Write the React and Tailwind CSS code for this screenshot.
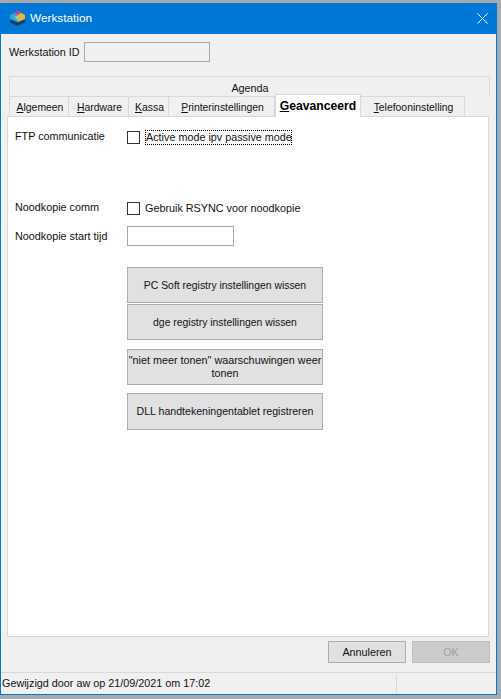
const Tab = ({ first, rest, className = "" }) => (
    <div className={`h-5 border-t border-r border-[#d9d9d9] flex justify-center items-center pt-[3px] pl-[2px] text-[10.4px] ${className}`}>
        <span><u>{first}</u>{rest}</span>
    </div>
);

const Check = () => <div className="w-[13px] h-[13px] border border-[#333333] bg-white shrink-0"></div>;

const GrayButton = ({ className = "", children }) => (
    <button className={`w-[196px] border border-[#adadad] bg-[#e1e1e1] flex items-center justify-center text-center leading-[13px] ${className}`}>
        {children}
    </button>
);

export default function App() {
    return (
        <div className="w-[501px] h-[699px] bg-[#a9a9a9] pt-[3px] pr-1 pb-1 font-['Liberation_Sans',sans-serif] text-[10.8px] text-[#111111] overflow-hidden">
            <div className="h-[692px] w-[497px] bg-[#f0f0f0] border-x border-b border-[#0078d7] flex flex-col">
                {/* title bar */}
                <div className="h-[31px] bg-[#0078d7] flex items-center pl-2 pr-2 shrink-0">
                    <svg width="17" height="17" viewBox="0 0 17 17" className="shrink-0">
                        <path d="M1 9 L8.500 12.500 L16 9 L16 12.500 L8.500 16 L1 12.500 Z" fill="#1c3f6e" />
                        <path d="M1 5 L8.500 1 L8.500 12 L1 9 Z" fill="#27a9d8" />
                        <path d="M8.500 1 L16 5 L16 9 L8.500 12 Z" fill="#f4b42a" />
                        <path d="M5 3 L8.500 1 L12 3 L8.500 5 Z" fill="#d6358f" />
                        <path d="M5 7 L8.500 5.500 L12 7 L8.500 10 Z" fill="#8ed1a0" />
                    </svg>
                    <span className="ml-[4px] text-white text-[11.8px] flex-1">Werkstation</span>
                    <svg width="11" height="11" viewBox="0 0 11 11" stroke="white" strokeWidth="1" className="shrink-0">
                        <path d="M0.500 0.500 L10.500 10.500 M10.500 0.500 L0.500 10.500" />
                    </svg>
                </div>

                {/* id row */}
                <div className="h-5 mt-2 flex items-center pl-2 shrink-0">
                    <span className="w-[75px] whitespace-nowrap">Werkstation ID</span>
                    <div className="w-[126px] h-5 border border-[#a9a9a9] bg-[#f0f0f0]"></div>
                </div>

                {/* tabs */}
                <div className="mt-[14px] ml-2 w-[481px] h-5 border-t border-x border-[#d9d9d9] shrink-0 flex justify-center pl-px pt-[3px]">
                    <span className="leading-[17px]">Agenda</span>
                </div>
                <div className="ml-2 h-5 flex items-end shrink-0 relative z-10">
                    <Tab first="A" rest="lgemeen" className="w-[60px] border-l" />
                    <Tab first="H" rest="ardware" className="w-[60px]" />
                    <Tab first="K" rest="assa" className="w-10" />
                    <Tab first="P" rest="rinterinstellingen" className="w-[106px]" />
                    <div className="w-[86px] h-[23px] -mb-px bg-white border-x border-t border-[#d9d9d9] flex justify-center items-center font-bold text-black text-[12.2px] pt-[1px]">
                        <span><u>G</u>eavanceerd</span>
                    </div>
                    <Tab first="T" rest="elefooninstelling" className="w-[104px]" />
                </div>

                {/* tab page */}
                <div className="ml-[6px] w-[482px] h-[521px] bg-white border border-[#d9d9d9] shrink-0 pt-[13px] pl-[7px]">
                    <div className="flex h-[15px] items-center">
                        <span className="w-[112px] -mt-[2px]">FTP communicatie</span>
                        <Check />
                        <span className="ml-[5px] border border-dotted border-black leading-[13px] w-[147px] whitespace-nowrap">Active mode ipv passive mode</span>
                    </div>
                    <div className="flex h-[15px] items-center mt-[56px]">
                        <span className="w-[112px] -mt-[2px]">Noodkopie comm</span>
                        <Check />
                        <span className="ml-[5px]">Gebruik RSYNC voor noodkopie</span>
                    </div>
                    <div className="flex h-5 items-center mt-[10px]">
                        <span className="w-[112px]">Noodkopie start tijd</span>
                        <div className="w-[107px] h-5 border border-[#a9a9a9]"></div>
                    </div>
                    <div className="ml-[112px] mt-[21px] flex flex-col">
                        <GrayButton className="h-9 text-[10.4px]">PC Soft registry instellingen wissen</GrayButton>
                        <GrayButton className="h-9 mt-[1px] text-[10.4px]">dge registry instellingen wissen</GrayButton>
                        <GrayButton className="h-9 mt-[9px]">"niet meer tonen" waarschuwingen weer tonen</GrayButton>
                        <GrayButton className="h-[37px] mt-2 text-[10.6px]">DLL handtekeningentablet registreren</GrayButton>
                    </div>
                </div>

                {/* dialog buttons */}
                <div className="flex mt-[4px] ml-[327px] gap-[6px] shrink-0">
                    <button className="w-[78px] h-[22px] border border-[#adadad] bg-[#e1e1e1]">Annuleren</button>
                    <button className="w-[78px] h-[22px] border border-[#bfbfbf] bg-[#cccccc] text-[#a0a0a0]">OK</button>
                </div>

                {/* status bar */}
                <div className="mt-[9px] flex-1 border-t border-[#d9d9d9] flex items-center pl-[1px] pr-1">
                    <span className="flex-1">Gewijzigd door aw op 21/09/2021 om 17:02</span>
                    <div className="w-[96px] h-5 border-l border-[#d9d9d9]"></div>
                </div>
            </div>
        </div>
    );
}
